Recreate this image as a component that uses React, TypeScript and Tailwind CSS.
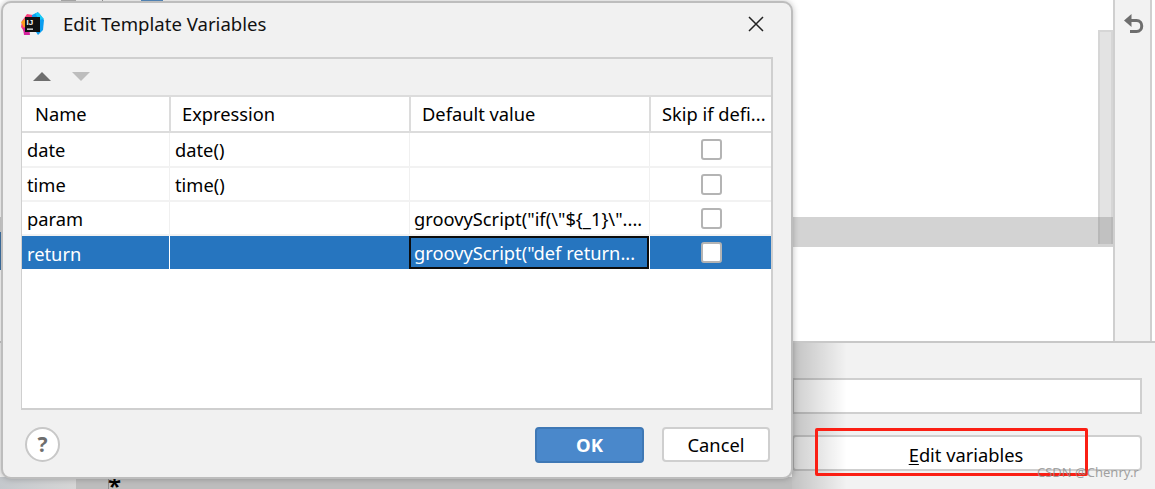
const font = "font-['Noto_Sans','Open_Sans',sans-serif]";

function Check() {
  return (
    <div className="flex h-full items-center justify-center pl-[1px]">
      <div className="h-[21px] w-[21px] rounded-[3px] border-2 border-[#b4b4b4] bg-white" />
    </div>
  );
}

function Logo() {
  return (
    <svg width="24" height="24" viewBox="0 0 24 24" className="block">
      <polygon points="2,9 7,2 13,3 12,12 5,21 1,15" fill="#fb3f7c" />
      <polygon points="1,10 5,7 7,13 4,16" fill="#ff9a1f" />
      <polygon points="3,16 9,14 10,23 4,23" fill="#d6249f" />
      <polygon points="12,3 18,0 24,8 23,18 18,23 12,14" fill="#0b9df0" />
      <polygon points="15,1 19,1 24,7 19,8" fill="#18c8f5" />
      <rect x="5" y="5" width="15" height="15" fill="#111" />
      <rect x="7" y="16.5" width="6" height="1.3" fill="#eee" />
      <text x="6.6" y="12.6" fontSize="8" fontWeight="700" fill="#fff" fontFamily="Liberation Sans">IJ</text>
    </svg>
  );
}

const rows = [
  { name: "date", expr: "date()", def: "", h: "h-[35px]", pad: "" },
  { name: "time", expr: "time()", def: "", h: "h-[34px]", pad: "pt-[2px]" },
  { name: "param", expr: "", def: 'groovyScript("if(\\"${_1}\\"....', h: "h-[34px]", pad: "pt-[2px]" },
];

export default function App() {
  return (
    <div className={`relative flex h-[489px] w-[1155px] flex-col overflow-hidden bg-[#f2f2f2] text-black ${font}`}>
      {/* window behind the dialog */}
      <div className="flex h-[343px] shrink-0 border-b-2 border-[#c8c8c8]">
        <div className="relative flex-1 bg-white">
          <div className="absolute right-0 top-[30px] h-[214px] w-[15px] border-x-2 border-t-2 border-[#d6d6d6] bg-[#e3e3e3]" />
          <div className="absolute left-0 right-0 top-[217px] h-[30px] bg-[#808080]/35" />
          <div className="absolute left-[61px] top-0 h-[3px] w-[15px] bg-[#b9b9b9]" />
          <div className="absolute left-[102px] top-0 h-[3px] w-[1px] bg-[#a0a0a0]" />
          <div className="absolute left-[141px] top-0 h-[3px] w-[22px] bg-[#5b93c8]" />
          <div className="absolute left-0 top-[232px] h-[38px] w-[2px] bg-[#3f74a8]" />
        </div>
        <div className="flex w-[37px] border-l-2 border-[#cfcfcf] pl-[9px] pt-[14px]">
          <svg width="20" height="20" viewBox="0 0 20 20" fill="none" stroke="#6e6e6e" strokeWidth="3">
            <path d="M5 6.5 H12.5 C19.5 6.5 19.5 17.5 12.5 17.5 H6" />
            <path d="M7.5 0 L0 6.5 L7.5 13 Z" fill="#6e6e6e" stroke="none" />
          </svg>
        </div>
        <div className="w-[5px] border-l-2 border-[#cfcfcf] bg-white" />
      </div>
      <div className="flex flex-1 flex-col gap-[21px] pl-[792px] pr-[13px] pt-[35px]">
        <div className="h-[36px] border-2 border-[#cfcfcf] bg-white" />
        <div className="flex h-[36px] items-center justify-center rounded-[4px] border-2 border-[#cfcfcf] bg-white pr-[2px] pt-[3px] text-[18.3px]">
          <span><span className="underline underline-offset-2">E</span>dit variables</span>
        </div>
      </div>
      {/* shadow cast by the dialog */}
      <div className="absolute bottom-0 left-[792px] top-[343px] w-[55px] bg-gradient-to-r from-[#000000]/20 to-transparent" />
      <div className="absolute bottom-0 left-0 flex h-[12px] w-[792px] bg-[#bdbdbd]">
        <div className="w-[76px] bg-gradient-to-r from-[#c4c8cc] to-[#d6d6d6]" />
        <div className="ml-[32px] w-[1px] bg-[#8f8f8f]" />
      </div>
      <div className="absolute left-[108px] top-[471px] text-[24px] font-semibold leading-[30px]">*</div>
      {/* annotation */}
      <div className="absolute left-[815px] top-[428px] h-[48px] w-[273px] rounded-[2px] border-[3px] border-[#fb1f14]" />
      <div className="absolute left-[1037px] top-[463px] text-[13px] leading-[18px] text-[#8b8b8b]/80">CSDN @Chenry.r</div>

      {/* dialog */}
      <div className="absolute left-[1px] top-[1px] flex h-[478px] w-[792px] flex-col rounded-[10px] border-2 border-[#bdbdbd] bg-[#f1f1f1] shadow-[0_0_6px_rgba(0,0,0,0.25)]">
        <div className="flex h-[54px] shrink-0 items-center pb-[12px] pl-[17px] pr-[25px]">
          <Logo />
          <span className="ml-[19px] flex-1 text-[18.6px] leading-[24px] text-[#111]">Edit Template Variables</span>
          <svg width="18" height="18" viewBox="0 0 18 18" stroke="#222" strokeWidth="1.5" className="mr-[1px]">
            <path d="M2 2 L16 16 M16 2 L2 16" />
          </svg>
        </div>
        <div className="mx-[18px] flex h-[353px] shrink-0 flex-col border-y-2 border-l border-r-2 border-[#cfcfcf] bg-white">
          <div className="flex h-[36px] shrink-0 items-center gap-[21px] bg-[#f1f1f1] pb-[2px] pl-[11px]">
            <svg width="18" height="9"><polygon points="9,0 18,9 0,9" fill="#6e6e6e" /></svg>
            <svg width="18" height="9"><polygon points="0,0 18,0 9,9" fill="#bdbdbd" /></svg>
          </div>
          <div className="grid h-[38px] shrink-0 grid-cols-[147px_240px_240px_1fr] border-y-2 border-[#dcdcdc] text-[18.3px]">
            {["Name", "Expression", "Default value", "Skip if defi..."].map((t, i) => (
              <div key={t} className={`flex items-center pb-[1px] ${i ? "border-l-2 border-[#dcdcdc] pl-[11px]" : "pl-[13px]"}`}>
                {t}
              </div>
            ))}
          </div>
          {rows.map((r) => (
            <div key={r.name} className={`grid ${r.h} shrink-0 grid-cols-[147px_240px_240px_1fr] border-b-2 border-[#f2f2f2] text-[18.3px]`}>
              <div className={`flex items-center pl-[5px] ${r.pad}`}>{r.name}</div>
              <div className={`flex items-center border-l border-[#f0f0f0] pl-[5px] ${r.pad}`}>{r.expr}</div>
              <div className={`flex items-center overflow-hidden whitespace-nowrap border-l border-[#f0f0f0] pl-[4px] ${r.pad}`}>{r.def}</div>
              <div className="border-l border-[#f0f0f0]"><Check /></div>
            </div>
          ))}
          <div className="grid h-[33px] shrink-0 grid-cols-[147px_240px_240px_1fr] bg-[#2675bf] text-[18.3px] text-white">
            <div className="flex items-center pl-[5px] pt-[2px]">return</div>
            <div className="border-l border-white" />
            <div className="flex items-center overflow-hidden whitespace-nowrap border-2 border-[#0c0c0c] pl-[3px] pt-[1px]">groovyScript("def return...</div>
            <div className="border-l border-white"><Check /></div>
          </div>
        </div>
        <div className="flex flex-1 items-center justify-between pl-[22px] pr-[21px] pt-[2px]">
          <div className="flex h-[35px] w-[35px] items-center justify-center rounded-full border-2 border-[#c8c8c8] bg-white text-[21px] font-bold text-[#6e6e6e]">?</div>
          <div className="flex gap-[18px]">
            <button className="h-[36px] w-[109px] rounded-[4px] border-2 border-[#3f78b5] bg-[#4a88cb] text-[18.5px] font-bold text-white">OK</button>
            <button className="h-[35px] w-[108px] rounded-[4px] border-2 border-[#cfcfcf] bg-white pt-[2px] text-[18.3px]">Cancel</button>
          </div>
        </div>
      </div>
    </div>
  );
}
